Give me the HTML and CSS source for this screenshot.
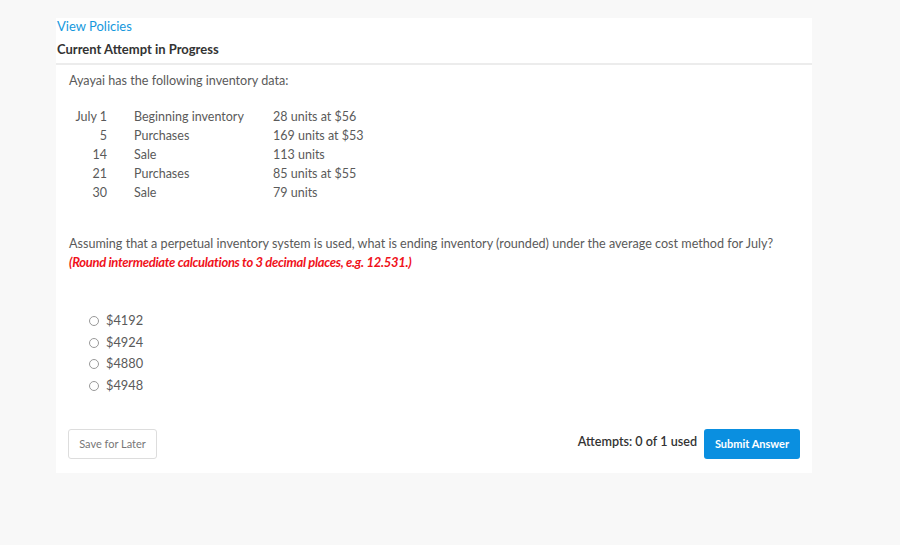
FILE: index.html
```html
<!DOCTYPE html>
<html lang="en">
<head>
    <meta charset="UTF-8">
    <title>Current Attempt</title>
    <link rel="stylesheet" href="styles.css">
</head>
<body>
    <div class="panel">
        <div class="panel-head">
            <a href="#" class="policies">View Policies</a>
            <h3 class="attempt-title">Current Attempt in Progress</h3>
        </div>
        <div class="question">
            <p class="intro">Ayayai has the following inventory data:</p>
            <div class="inv-table">
                <span class="day">July 1</span><span>Beginning inventory</span><span>28 units at $56</span>
                <span class="day">5</span><span>Purchases</span><span>169 units at $53</span>
                <span class="day">14</span><span>Sale</span><span>113 units</span>
                <span class="day">21</span><span>Purchases</span><span>85 units at $55</span>
                <span class="day">30</span><span>Sale</span><span>79 units</span>
            </div>
            <p class="ask">Assuming that a perpetual inventory system is used, what is ending inventory (rounded) under the average cost method for July?</p>
            <p class="hint">(Round intermediate calculations to 3 decimal places, e.g. 12.531.)</p>

            <div class="options">
                <label class="option"><span class="radio"></span>$4192</label>
                <label class="option"><span class="radio"></span>$4924</label>
                <label class="option"><span class="radio"></span>$4880</label>
                <label class="option"><span class="radio"></span>$4948</label>
            </div>

            <div class="actions">
                <button class="btn-save">Save for Later</button>
                <div class="submit-group">
                    <span class="attempts">Attempts: 0 of 1 used</span>
                    <button class="btn-submit">Submit Answer</button>
                </div>
            </div>
        </div>
    </div>
</body>
</html>
```

FILE: styles.css
```css
body {
    margin: 0;
    background: #f8f8f8;
    font-family: Lato, "Open Sans", sans-serif;
    color: #5a5a5a;
}

.panel {
    background: #fff;
    width: 756px;
    margin: 18px 0 0 56px;
}

.panel-head {
    padding: 0 0 6px 1px;
    border-bottom: 2px solid #ececec;
}

.policies {
    display: block;
    font-size: 13px;
    line-height: 16px;
    color: #1598dd;
    text-decoration: none;
}

.attempt-title {
    margin: 7px 0 0;
    font-size: 13px;
    line-height: 16px;
    font-weight: bold;
    color: #333;
}

.question {
    padding: 8px 12px 14px 13px;
}

.intro {
    margin: 0;
    font-size: 12.6px;
    line-height: 16px;
}

.inv-table {
    display: grid;
    grid-template-columns: 38px 112px auto;
    column-gap: 27px;
    margin-top: 18px;
    font-size: 12.5px;
    line-height: 19px;
}

.inv-table .day {
    text-align: right;
}

.ask {
    margin: 32px 0 0;
    font-size: 12.6px;
    line-height: 19px;
}

.hint {
    margin: 0;
    font-size: 13px;
    line-height: 19px;
    color: #f0121b;
    font-style: italic;
    font-weight: bold;
    letter-spacing: -0.3px;
}

.options {
    margin-top: 38px;
    padding-left: 20px;
}

.option {
    display: flex;
    align-items: center;
    gap: 7px;
    font-size: 12.8px;
    line-height: 21.7px;
}

.radio {
    width: 8px;
    height: 8px;
    border: 1px solid #999;
    border-radius: 50%;
}

.actions {
    display: flex;
    justify-content: space-between;
    align-items: center;
    margin-top: 32px;
}

.btn-save {
    font-family: inherit;
    font-size: 11px;
    color: #777;
    background: #fff;
    border: 1px solid #ddd;
    border-radius: 3px;
    width: 89px;
    height: 30px;
    padding: 0;
    margin-left: -1px;
}

.submit-group {
    display: flex;
    align-items: center;
    gap: 7px;
}

.attempts {
    font-size: 12.6px;
    color: #333;
    font-weight: 600;
    margin-top: -5px;
}

.btn-submit {
    font-family: inherit;
    font-size: 11px;
    font-weight: bold;
    color: #fff;
    background: #0a8fe0;
    border: none;
    border-radius: 3px;
    width: 96px;
    height: 30px;
    padding: 0;
}
```
